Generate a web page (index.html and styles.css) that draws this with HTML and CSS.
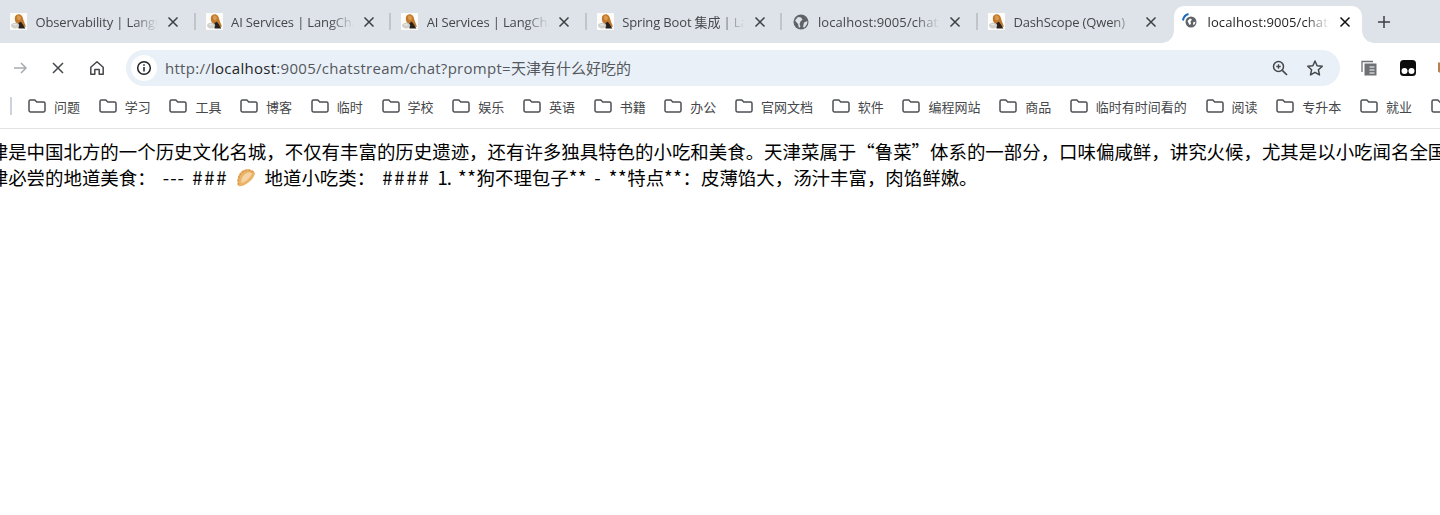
FILE: index.html
```html
<!DOCTYPE html>
<html lang="zh">
<head>
<meta charset="utf-8">
<title>localhost:9005/chat</title>
<link rel="stylesheet" href="styles.css">
</head>
<body>
<svg class="defs" width="0" height="0" aria-hidden="true">
  <symbol id="fav" viewBox="0 0 16 16">
    <rect width="16" height="16" fill="#fdfcf8"/>
    <path d="M4.500 5C4.500 2 7 .8 9 1.200c2 .5 3 2.300 3.300 4.300.3 2 1.700 4 2.700 7.500H7L6 9.500C5 8.500 4.500 7 4.500 5z" fill="#c07a30"/>
    <path d="M7 2.500c1.500-.5 3 .5 3.300 2 .2 1.500-.8 2.500-2 2.300C7 6.500 6 4 7 2.500z" fill="#dd9a4a"/>
    <path d="M8 9.500l2.200-1.300 1.800 2.300 2.500 4H8z" fill="#26221f"/>
    <path d="M1 11.500c0-1.500 2-2.300 3.800-2.300S8.500 10 8.500 11.500s-1.500 3.200-3.700 3.200S1 13 1 11.500z" fill="#cfd0cd"/>
    <path d="M2.500 11c.8-.7 3.500-.7 4.500 0-1 .8-3.500.8-4.500 0z" fill="#f3f3f1"/>
  </symbol>
  <symbol id="globe" viewBox="0 0 16 16">
    <circle cx="8" cy="8" r="7.500" fill="#5f6368"/>
    <path d="M2 6.500l3-3.500 3 .5 1.500 2-2 2-1 2.500 1 2.500-1.500 1.500-1-4zM11 8.500l3.500-1.500-.5 3-2.500 3.500-1.500-.5z" fill="#dee3e9"/>
  </symbol>
  <symbol id="close" viewBox="0 0 12 12">
    <path d="M1.500 1.500l9 9M10.500 1.500l-9 9" fill="none" stroke="currentColor" stroke-width="1.500"/>
  </symbol>
  <symbol id="folder" viewBox="0 0 18 16">
    <path d="M1 3.500a1.500 1.500 0 0 1 1.500-1.500h4.300l2 2h6.700A1.500 1.500 0 0 1 17 5.500v7a1.500 1.500 0 0 1-1.500 1.500h-13A1.500 1.500 0 0 1 1 12.500z" fill="none" stroke="#4c4f54" stroke-width="1.500"/>
  </symbol>
</svg>

<div class="tabstrip">
  <div class="tab"><svg class="favicon"><use href="#fav"/></svg><span class="tab-title">Observability | LangChain4j</span><svg class="tab-close"><use href="#close"/></svg></div>
  <div class="tab"><svg class="favicon"><use href="#fav"/></svg><span class="tab-title">AI Services | LangChain4j</span><svg class="tab-close"><use href="#close"/></svg></div>
  <div class="tab"><svg class="favicon"><use href="#fav"/></svg><span class="tab-title">AI Services | LangChain4j</span><svg class="tab-close"><use href="#close"/></svg></div>
  <div class="tab"><svg class="favicon"><use href="#fav"/></svg><span class="tab-title">Spring Boot 集成 | LangChain4j</span><svg class="tab-close"><use href="#close"/></svg></div>
  <div class="tab"><svg class="favicon globe"><use href="#globe"/></svg><span class="tab-title loc">localhost:9005/chatstream</span><svg class="tab-close"><use href="#close"/></svg></div>
  <div class="tab tab-last"><svg class="favicon"><use href="#fav"/></svg><span class="tab-title">DashScope (Qwen)</span><svg class="tab-close"><use href="#close"/></svg></div>
  <div class="tab tab-active">
    <svg class="favicon spinner" viewBox="0 0 16 16">
      <circle cx="9" cy="9" r="5.500" fill="#5f6368"/>
      <path d="M5.500 8l2.500-2.500 2 1-1.500 2 .5 2.500-1.500 1zM11 9.500l2.500-1-.5 2-1.500 2z" fill="#fff"/>
      <path d="M1 7.500C1.500 4 3.500 1.800 6.500 1" fill="none" stroke="#1a68c0" stroke-width="2"/>
    </svg>
    <span class="tab-title loc">localhost:9005/chatstream</span><svg class="tab-close"><use href="#close"/></svg>
  </div>
  <svg class="newtab" viewBox="0 0 14 14"><path d="M7 1v12M1 7h12" fill="none" stroke="#3c4043" stroke-width="1.500"/></svg>
</div>

<div class="toolbar">
  <svg class="tool-ic back" viewBox="0 0 16 16"><path d="M2 8h12M9 3l5 5-5 5" fill="none" stroke="#a9abae" stroke-width="1.500"/></svg>
  <svg class="tool-ic stop" viewBox="0 0 16 16"><path d="M3 3l10 10M13 3L3 13" fill="none" stroke="#44474b" stroke-width="1.500"/></svg>
  <svg class="tool-ic home" viewBox="0 0 16 16"><path d="M1.800 7.300L8 1.800l6.200 5.500v6.900h-4V9.500H5.800v4.700h-4z" fill="none" stroke="#44474b" stroke-width="1.500" stroke-linejoin="round"/></svg>
  <div class="omnibox">
    <div class="info"><svg viewBox="0 0 16 16"><circle cx="8" cy="8" r="6.300" fill="none" stroke="#1f2124" stroke-width="1.500"/><path d="M8 7v4.500M8 4.300v1.500" stroke="#1f2124" stroke-width="1.500"/></svg></div>
    <div class="url"><span class="latin">http://<span class="host">localhost</span>:9005/chatstream/chat?prompt=</span>天津有什么好吃的</div>
    <svg class="omni-ic" viewBox="0 0 16 16"><circle cx="6.500" cy="6.500" r="5" fill="none" stroke="#44474b" stroke-width="1.500"/><path d="M10.300 10.300l4.700 4.700" stroke="#44474b" stroke-width="1.700"/><path d="M6.500 4.300v4.400M4.300 6.500h4.400" stroke="#44474b" stroke-width="1.300"/></svg>
    <svg class="omni-ic star-ic" viewBox="0 0 18 18"><path d="M9 2l2.100 4.800 5.200.5-3.900 3.500 1.100 5.100L9 13.300l-4.500 2.600 1.100-5.100-3.900-3.500 5.200-.5z" fill="none" stroke="#44474b" stroke-width="1.500" stroke-linejoin="round"/></svg>
  </div>
  <svg class="ext ext-notes" viewBox="0 0 18 18"><path d="M2 13V2.500h11" fill="none" stroke="#6d7074" stroke-width="1.300"/><path d="M4.500 16.500v-12h12v12z" fill="#6d7074"/><path d="M9.500 8h5M9.500 11h5M9.500 14h5" stroke="#fff" stroke-width="1.200"/></svg>
  <svg class="ext ext-tamper" viewBox="0 0 18 18"><rect x="1" y="1" width="16" height="16" rx="3.500" fill="#0c0c0c"/><circle cx="5.500" cy="12" r="3" fill="#fff"/><circle cx="12.500" cy="12" r="3" fill="#fff"/></svg>
  <svg class="ext ext-shield" viewBox="0 0 8 18"><path d="M1 3.500h7v9l-3 3-4-3z" fill="#b5824f"/><path d="M3 5.500h5v4H3z" fill="#e4c8a8"/></svg>
</div>

<div class="bookmarks">
  <div class="bm-sep"></div>
  <div class="bm"><svg><use href="#folder"/></svg><span>问题</span></div>
  <div class="bm"><svg><use href="#folder"/></svg><span>学习</span></div>
  <div class="bm"><svg><use href="#folder"/></svg><span>工具</span></div>
  <div class="bm"><svg><use href="#folder"/></svg><span>博客</span></div>
  <div class="bm"><svg><use href="#folder"/></svg><span>临时</span></div>
  <div class="bm"><svg><use href="#folder"/></svg><span>学校</span></div>
  <div class="bm"><svg><use href="#folder"/></svg><span>娱乐</span></div>
  <div class="bm"><svg><use href="#folder"/></svg><span>英语</span></div>
  <div class="bm"><svg><use href="#folder"/></svg><span>书籍</span></div>
  <div class="bm"><svg><use href="#folder"/></svg><span>办公</span></div>
  <div class="bm"><svg><use href="#folder"/></svg><span>官网文档</span></div>
  <div class="bm"><svg><use href="#folder"/></svg><span>软件</span></div>
  <div class="bm"><svg><use href="#folder"/></svg><span>编程网站</span></div>
  <div class="bm"><svg><use href="#folder"/></svg><span>商品</span></div>
  <div class="bm"><svg><use href="#folder"/></svg><span>临时有时间看的</span></div>
  <div class="bm"><svg><use href="#folder"/></svg><span>阅读</span></div>
  <div class="bm"><svg><use href="#folder"/></svg><span>专升本</span></div>
  <div class="bm"><svg><use href="#folder"/></svg><span>就业</span></div>
  <div class="bm"><svg><use href="#folder"/></svg></div>
</div>

<main class="content">
  <p class="line">天津是中国北方的一个历史文化名城，不仅有丰富的历史遗迹，还有许多独具特色的小吃和美食。天津菜属于“鲁菜”体系的一部分，口味偏咸鲜，讲究火候，尤其是以小吃闻名全国。</p>
  <p class="line line-two">天津必尝的地道美食： <span class="dash">---</span> <span class="hash">###</span> <svg class="dumpling" viewBox="0 0 20 20"><path d="M2.500 18C.5 12 2 5 7 2.500 11 .5 16 1 19 5c-.5 4-4 8-8 10.500-3 2-6 3.500-8.500 2.500z" fill="#eab36a"/><path d="M2.500 17C1.500 12 3 5.500 7.500 3.200 11 1.500 15.500 1.800 18 5" fill="none" stroke="#dd9a4c" stroke-width="1.600" stroke-dasharray="2.200 1.200"/><path d="M5.500 15C4.500 11 7 6.500 11 5c2-.7 4-.5 5 .5C15 9 10 14 5.500 15z" fill="#f6d3a2"/></svg> 地道小吃类： <span class="hash">####</span> <span class="num">1.</span> <span class="aster">**</span>狗不理包子<span class="aster">**</span> <span class="dash">-</span> <span class="aster">**</span>特点<span class="aster">**</span>：皮薄馅大，汤汁丰富，肉馅鲜嫩。</p>
</main>
</body>
</html>
```

FILE: styles.css
```css
* { box-sizing: border-box; }
html, body { margin: 0; height: 100%; overflow: hidden; background: #fff; }
body { font-family: "Open Sans", "Noto Sans CJK SC", sans-serif; color: #000; }
.defs { display: block; height: 0; }

.tabstrip { display: flex; align-items: flex-start; height: 43px; background: #dee3e9; padding-top: 4px; }
.tab { position: relative; display: flex; align-items: center; flex: none; width: 195.600px; height: 35px; padding: 0 16.500px 0 10px; color: #45474a; font-size: 13px; letter-spacing: -.15px; }
.tab::after { content: ""; position: absolute; right: 0; top: 9px; width: 2px; height: 17px; background: #c1c5ca; }
.tab-last::after { display: none; }
.favicon { flex: none; width: 17px; height: 17px; margin-right: 8.500px; }
.globe { width: 16px; height: 16px; margin-left: 1px; }
.tab-title { flex: 1; min-width: 0; white-space: nowrap; overflow: hidden; -webkit-mask-image: linear-gradient(to right, #000 80%, transparent 100%); mask-image: linear-gradient(to right, #000 80%, transparent 100%); }
.loc { letter-spacing: .1px; }
.tab-close { flex: none; width: 12px; height: 12px; margin-left: 9px; color: #3c4043; }
.tab-active { width: 188px; height: 37px; margin-top: 2px; padding: 0 11px 6px 8px; background: #fff; border-radius: 10px 10px 0 0; color: #1f1f1f; }
.tab-active .favicon { width: 16px; height: 16px; margin-right: 10px; margin-top: -2px; }
.tab-active .tab-close { color: #111; }
.tab-active::after, .tab-active::before { content: ""; position: absolute; bottom: 0; width: 12px; height: 12px; top: auto; background: radial-gradient(circle at 0 0, transparent 11.500px, #fff 12px); }
.tab-active::before { left: -12px; }
.tab-active::after { right: -12px; background: radial-gradient(circle at 100% 0, transparent 11.500px, #fff 12px); }
.newtab { flex: none; width: 14px; height: 14px; margin: 10.500px 0 0 15px; }

.toolbar { display: flex; align-items: center; height: 43px; background: #fff; padding: 7px 0 0 12px; }
.tool-ic { flex: none; width: 16px; height: 16px; }
.back { margin-right: 22px; }
.stop { margin-right: 23px; }
.home { margin-right: 20.500px; }
.omnibox { flex: none; display: flex; align-items: center; width: 1214.500px; height: 36px; background: #e9f0f8; border-radius: 18px; padding: 0 16px 0 5px; }
.info { flex: none; display: flex; align-items: center; justify-content: center; width: 26px; height: 26px; border-radius: 50%; background: #fff; }
.info svg { width: 16px; height: 16px; }
.url { flex: 1; min-width: 0; margin-left: 8.500px; padding-bottom: 2px; font-size: 15px; color: #55585c; white-space: nowrap; }
.latin { letter-spacing: .28px; }
.host { color: #1f1f1f; }
.omni-ic { flex: none; width: 16px; height: 16px; margin-right: 18px; }
.star-ic { width: 18px; height: 18px; margin-right: 0; }
.ext { flex: none; width: 18px; height: 18px; }
.ext-notes { margin-left: 20px; }
.ext-tamper { margin-left: 21px; }
.ext-shield { width: 8px; margin-left: 20px; }

.bookmarks { display: flex; align-items: center; height: 43px; background: #fff; padding: 0 0 2px 10px; border-bottom: 1px solid #e3e3e3; overflow: hidden; }
.bm-sep { flex: none; width: 2px; height: 18px; background: #ccd3db; margin-right: 16px; }
.bm { flex: none; display: flex; align-items: center; gap: 8px; margin-right: 18.700px; color: #45474a; font-size: 13px; }
.bm svg { flex: none; width: 18px; height: 16px; }

.content { margin: 9px 0 0 -28.700px; width: 1600px; font-family: "Noto Sans CJK SC", sans-serif; font-size: 18.450px; line-height: 26px; }
.line { margin: 0; white-space: nowrap; }
.line-two { word-spacing: 3px; }
.dash { letter-spacing: 1px; }
.hash { letter-spacing: 1.800px; }
.num { letter-spacing: -1px; }
.aster { letter-spacing: .6px; }
.dumpling { width: 20px; height: 20px; vertical-align: -3px; margin: 0 1px; }
```
